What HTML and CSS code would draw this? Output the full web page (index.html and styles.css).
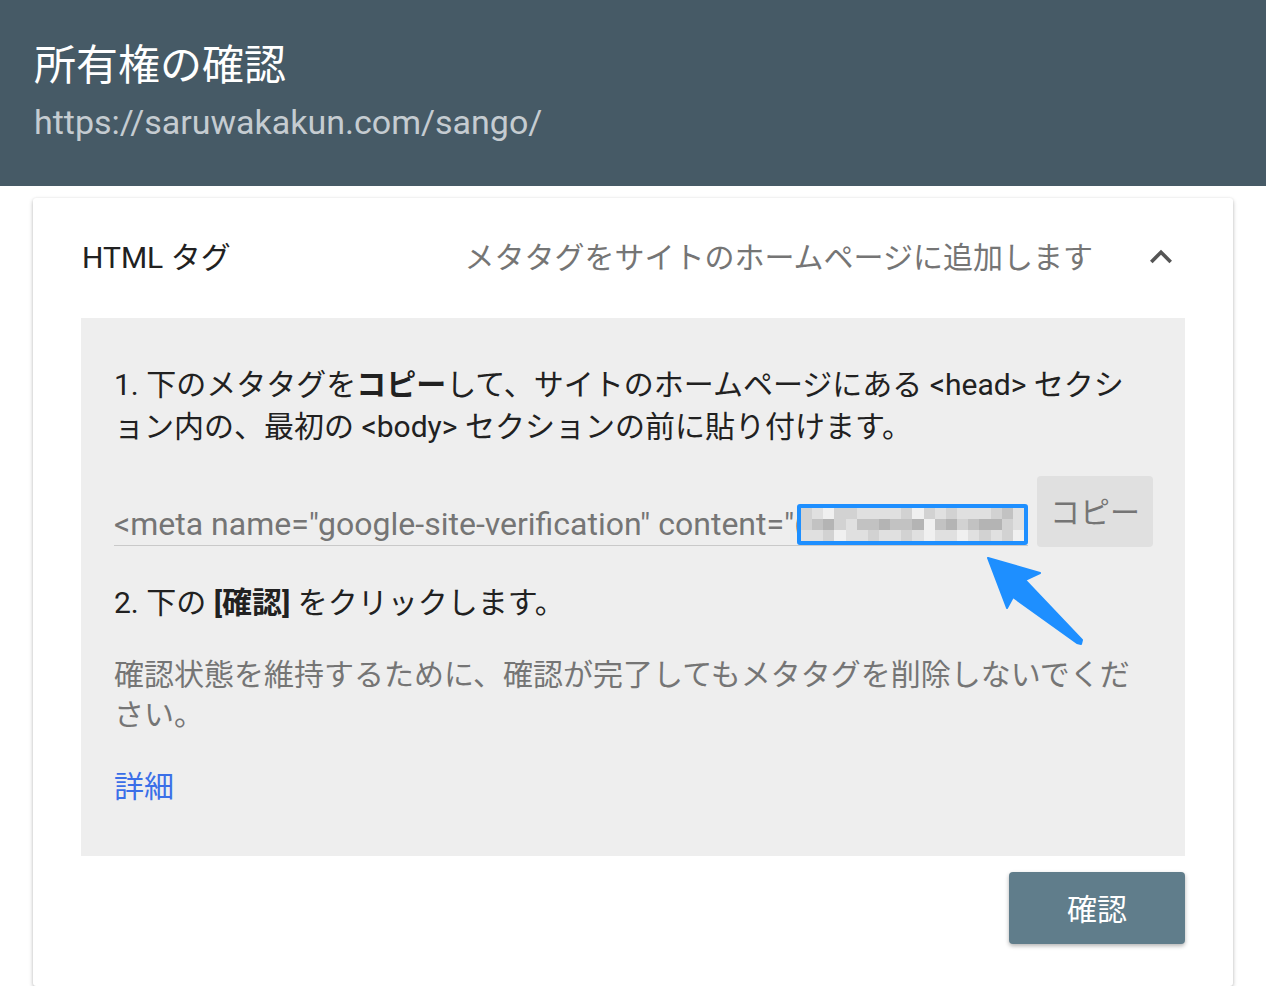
FILE: index.html
```html
<!DOCTYPE html>
<html lang="ja">
<head>
    <meta charset="UTF-8">
    <meta name="viewport" content="width=device-width, initial-scale=1.0">
    <title>所有権の確認</title>
    <link rel="stylesheet" href="styles.css">
</head>

<body>
    <header class="site-header">
        <h1>所有権の確認</h1>
        <p class="site-url">https://saruwakakun.com/sango/</p>
    </header>

    <main class="card">
        <div class="card-head">
            <h2>HTML タグ</h2>
            <span class="card-sub">メタタグをサイトのホームページに追加します</span>
            <button class="toggle" aria-label="閉じる">
                <svg viewBox="0 0 24 24" width="44" height="44"><path d="M12 8l-6 6 1.41 1.41L12 10.83l4.59 4.58L18 14z"/></svg>
            </button>
        </div>

        <div class="panel">
            <p class="step">1. 下のメタタグを<b>コピー</b>して、サイトのホームページにある &lt;head&gt; セクション内の、最初の &lt;body&gt; セクションの前に貼り付けます。</p>

            <div class="meta-row">
                <div class="meta-field">
                    <span class="meta-text">&lt;meta name="google-site-verification" content="(</span>
                    <span class="redacted">
                        <i class="c"></i><i class="b"></i><i class="a"></i><i class="c"></i><i class="c"></i><i class="b"></i><i class="b"></i><i class="b"></i><i class="b"></i><i class="c"></i><i class="a"></i><i class="c"></i><i class="b"></i><i class="c"></i><i class="b"></i><i class="b"></i><i class="b"></i><i class="c"></i><i class="d"></i><i class="b"></i>
                        <i class="c"></i><i class="d"></i><i class="e"></i><i class="c"></i><i class="b"></i><i class="d"></i><i class="d"></i><i class="e"></i><i class="d"></i><i class="d"></i><i class="e"></i><i class="a"></i><i class="d"></i><i class="e"></i><i class="c"></i><i class="d"></i><i class="e"></i><i class="e"></i><i class="c"></i><i class="b"></i>
                        <i class="b"></i><i class="b"></i><i class="c"></i><i class="a"></i><i class="b"></i><i class="b"></i><i class="c"></i><i class="b"></i><i class="b"></i><i class="c"></i><i class="b"></i><i class="a"></i><i class="b"></i><i class="b"></i><i class="a"></i><i class="b"></i><i class="c"></i><i class="b"></i><i class="c"></i><i class="a"></i>
                    </span>
                </div>
                <button class="btn-copy">コピー</button>
            </div>

            <p class="step step-2">2. 下の <b>[確認]</b> をクリックします。</p>

            <p class="note">確認状態を維持するために、確認が完了してもメタタグを削除しないでください。</p>

            <a href="#" class="more">詳細</a>
        </div>

        <div class="card-foot">
            <button class="btn-verify">確認</button>
        </div>

        <!-- Hinweis-Pfeil auf den Code -->
        <svg class="pointer" viewBox="0 0 140 100" width="140" height="100">
            <polygon points="5,5 57,20 42,27 99,87 98,91 94,90 30,44 24,55"/>
        </svg>
    </main>
</body>
</html>
```

FILE: styles.css
```css
* {
    box-sizing: border-box;
}

body {
    margin: 0;
    background: #fff;
    font-family: Roboto, "Noto Sans CJK JP", sans-serif;
    color: #212121;
}

.site-header {
    height: 186px;
    padding: 41px 34px 0;
    background: #465a66;
}

.site-header h1 {
    margin: 0;
    font-size: 42px;
    line-height: 50px;
    font-weight: 400;
    color: #fff;
}

.site-url {
    margin: 11px 0 0;
    font-size: 34px;
    line-height: 40px;
    color: #c5ccd1;
}

.card {
    position: relative;
    width: 1200px;
    margin: 12px 33px 0;
    padding-bottom: 42px;
    background: #fff;
    border-radius: 3px;
    box-shadow: 0 2px 4px rgba(0, 0, 0, 0.25), 0 0 2px rgba(0, 0, 0, 0.08);
}

.card-head {
    display: flex;
    align-items: center;
    height: 120px;
    padding: 0 50px 6px 49px;
}

.card-head h2 {
    margin: 0;
    font-size: 30px;
    font-weight: 400;
    color: #212121;
}

.card-sub {
    margin-left: auto;
    margin-right: 46px;
    font-size: 30px;
    color: #757575;
}

.toggle {
    width: 44px;
    height: 44px;
    margin-top: 4px;
    padding: 0;
    border: none;
    background: none;
    fill: #555;
}

.toggle svg {
    display: block;
}

.panel {
    margin: 0 48px;
    padding: 46px 32px 48px 33px;
    background: #eeeeee;
    font-size: 30px;
}

.panel p {
    margin: 0;
}

.step {
    line-height: 42px;
    color: #212121;
}

.step b {
    font-weight: 700;
}

.meta-row {
    display: flex;
    gap: 9px;
    margin-top: 28px;
}

.meta-field {
    flex: 1;
    display: flex;
    align-items: center;
    height: 43px;
    margin-top: 27px;
    border-bottom: 1px solid #c9c9c9;
    overflow: hidden;
}

.meta-text {
    flex: 1;
    white-space: nowrap;
    overflow: hidden;
    font-size: 32px;
    line-height: 42px;
    color: #757575;
}

.redacted {
    flex: 0 0 231px;
    display: grid;
    grid-template-columns: repeat(20, 1fr);
    grid-template-rows: repeat(3, 1fr);
    height: 41px;
    margin-left: -2px;
    border: 4px solid #1e8fff;
    border-radius: 3px;
    background: #ddd;
}

.redacted i.a { background: #f0f0f0; }
.redacted i.b { background: #e0e0e0; }
.redacted i.c { background: #d2d2d2; }
.redacted i.d { background: #c2c2c2; }
.redacted i.e { background: #b4b4b4; }

.btn-copy {
    width: 116px;
    height: 71px;
    padding-bottom: 4px;
    border: none;
    border-radius: 4px;
    background: #e0e0e0;
    font-family: inherit;
    font-size: 30px;
    color: #757575;
}

.step-2 {
    margin-top: 35px !important;
}

.note {
    margin-top: 31px !important;
    line-height: 40px;
    color: #757575;
}

.more {
    display: block;
    margin-top: 31px;
    line-height: 42px;
    color: #3b6fe8;
    text-decoration: none;
}

.card-foot {
    display: flex;
    justify-content: flex-end;
    padding: 16px 48px 0;
}

.btn-verify {
    width: 176px;
    height: 72px;
    padding-bottom: 4px;
    border: none;
    border-radius: 4px;
    background: #607d8b;
    box-shadow: 0 2px 4px rgba(0, 0, 0, 0.3);
    font-family: inherit;
    font-size: 30px;
    color: #fff;
}

.pointer {
    position: absolute;
    left: 950px;
    top: 355px;
    fill: #1e8fff;
    stroke: #1e8fff;
    stroke-width: 2;
    stroke-linejoin: round;
}
```
